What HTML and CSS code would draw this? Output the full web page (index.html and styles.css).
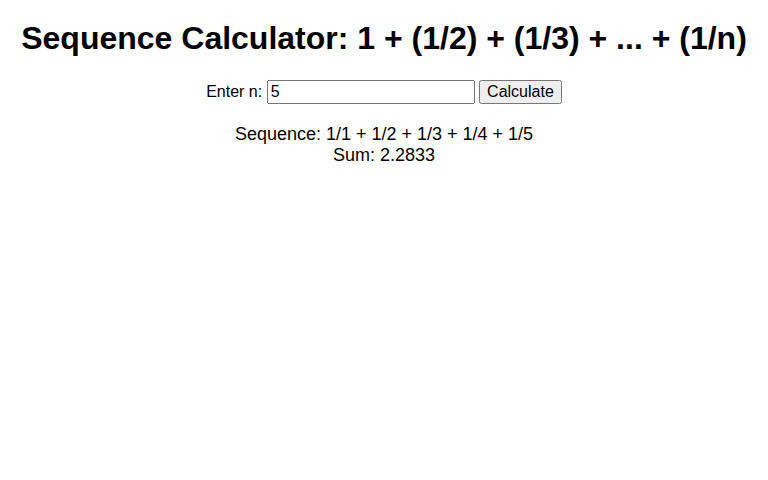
FILE: index.html
```html
<!DOCTYPE html>
<html>

<head>
    <title>Sequence Calculator</title>
    <link rel="stylesheet" href="styles.css">
</head>

<body>
<h1>Sequence Calculator: 1 + (1/2) + (1/3) + ... + (1/n)</h1>

<form class="calc-form" id="calc-form">
    <label for="n">Enter n:</label>
    <input id="n" type="number" value="5" min="1" />
    <button type="submit">Calculate</button>
</form>

<div class="result" id="result"></div>

<script type="text/javascript">
    var form = document.querySelector('#calc-form');
    var result = document.querySelector('#result');

    function calculate() {
        var n = parseInt(document.querySelector('#n').value, 10);
        if (!n || n < 1) {
            result.innerHTML = 'Please enter a positive number.';
            return;
        }
        var terms = [];
        var sum = 0;
        for (var i = 1; i <= n; i++) {
            terms.push('1/' + i);
            sum += 1 / i;
        }
        result.innerHTML = '<p>Sequence: ' + terms.join(' + ') + '</p>' +
            '<p>Sum: ' + sum.toFixed(4) + '</p>';
    }

    form.addEventListener('submit', function(event) {
        event.preventDefault();
        calculate();
    });

    calculate();
</script>
</body>
</html>
```

FILE: styles.css
```css
body {
    font-family: "Liberation Sans", Arial, sans-serif;
    text-align: center;
    margin: 0;
    padding: 0;
}
h1 {
    font-size: 32px;
    margin: 20px 0 23px;
}
.calc-form {
    margin: 0;
    font-size: 16px;
}
.calc-form input {
    font-family: "Liberation Sans", Arial, sans-serif;
    font-size: 16px;
    width: 200px;
    padding: 1px 2px;
    -moz-appearance: textfield;
}
.calc-form input::-webkit-inner-spin-button,
.calc-form input::-webkit-outer-spin-button {
    -webkit-appearance: none;
    margin: 0;
}
.calc-form button {
    font-family: "Liberation Sans", Arial, sans-serif;
    font-size: 16px;
}
.result {
    margin-top: 20px;
    font-size: 18px;
    line-height: 21px;
}
.result p {
    margin: 0;
}
```
